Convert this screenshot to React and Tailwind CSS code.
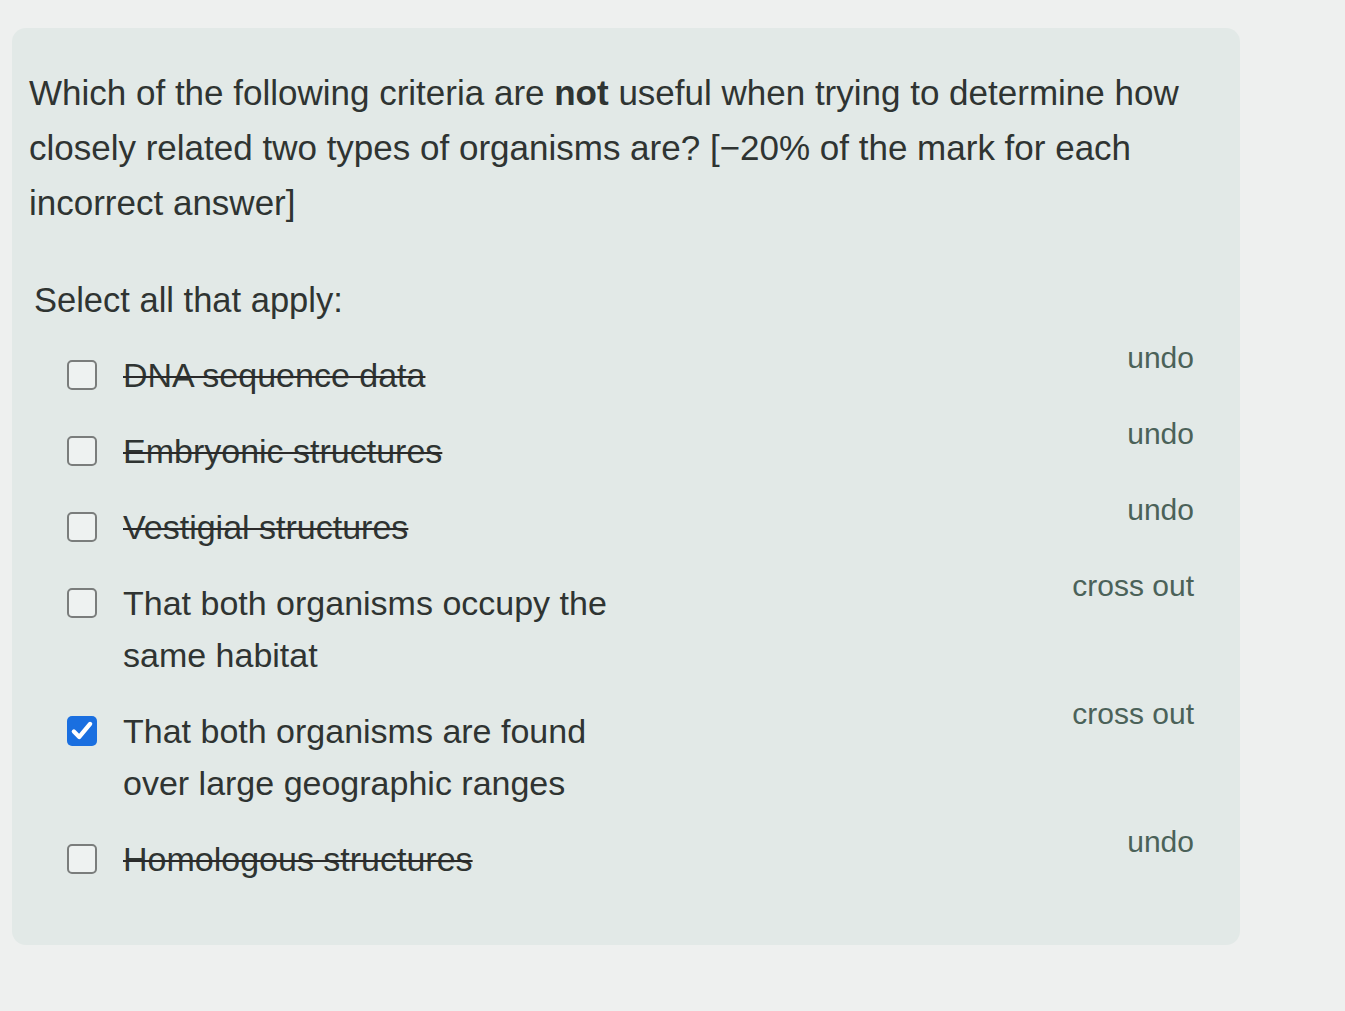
import React, { useState } from 'react'

const initialOptions = [
  { text: "DNA sequence data", crossed: true, checked: false },
  { text: "Embryonic structures", crossed: true, checked: false },
  { text: "Vestigial structures", crossed: true, checked: false },
  { text: "That both organisms occupy the same habitat", crossed: false, checked: false },
  { text: "That both organisms are found over large geographic ranges", crossed: false, checked: true },
  { text: "Homologous structures", crossed: true, checked: false },
];

function Checkbox({ checked, onClick }) {
  if (checked) {
    return (
      <button onClick={onClick} className="mt-[11px] w-[30px] h-[30px] shrink-0 rounded-[5px] bg-[#1a6fe0] flex items-center justify-center">
        <svg width="26" height="26" viewBox="0 0 24 24" fill="none" stroke="white" strokeWidth="4" strokeLinecap="round" strokeLinejoin="round">
          <path d="M4.5 12.5l5 5L19.5 5.5" />
        </svg>
      </button>
    );
  }
  return (
    <button onClick={onClick} className="mt-[11px] w-[30px] h-[30px] shrink-0 rounded-[5px] border-2 border-[#7a7d7c] bg-[#eef2f1]" />
  );
}

function App() {
  const [options, setOptions] = useState(initialOptions);

  const toggleCheck = (index) => {
    setOptions(prev => prev.map((o, i) => i === index ? { ...o, checked: !o.checked } : o));
  };

  const toggleCross = (index) => {
    setOptions(prev => prev.map((o, i) => i === index ? { ...o, crossed: !o.crossed } : o));
  };

  return (
    <div className="min-h-screen bg-[#eef0ef] pt-[28px] pl-[12px]" style={{ fontFamily: '"Liberation Sans", Arial, sans-serif' }}>
      <div className="w-[1228px] h-[917px] rounded-[14px] bg-[#e2e9e7] pt-[37px] pl-[17px] pr-[46px]">
        <p className="text-[35px] leading-[55px] text-[#2f3432] w-[1175px]">
          Which of the following criteria are <span className="font-bold">not</span> useful when trying to determine how closely related two types of organisms are? [−20% of the mark for each incorrect answer]
        </p>

        <p className="mt-[50px] ml-[5px] text-[34.5px] leading-[40px] text-[#2f3432]">Select all that apply:</p>

        {/* options list */}
        <div className="mt-[29px] flex flex-col gap-[24px]">
          {options.map((option, index) => (
            <div key={index} className="flex items-start">
              <div className="ml-[38px] flex items-start gap-[26px]">
                <Checkbox checked={option.checked} onClick={() => toggleCheck(index)} />
                <span className={`w-[520px] text-[34px] leading-[52px] text-[#2f3432] ${option.crossed ? 'line-through decoration-[2px] decoration-[#2a2a2a]' : ''}`}>
                  {option.text}
                </span>
              </div>
              <button
                onClick={() => toggleCross(index)}
                className="ml-auto -mt-[6px] text-[30px] leading-[30px] text-[#4b6259]"
              >
                {option.crossed ? 'undo' : 'cross out'}
              </button>
            </div>
          ))}
        </div>
      </div>
    </div>
  )
}

export default App
